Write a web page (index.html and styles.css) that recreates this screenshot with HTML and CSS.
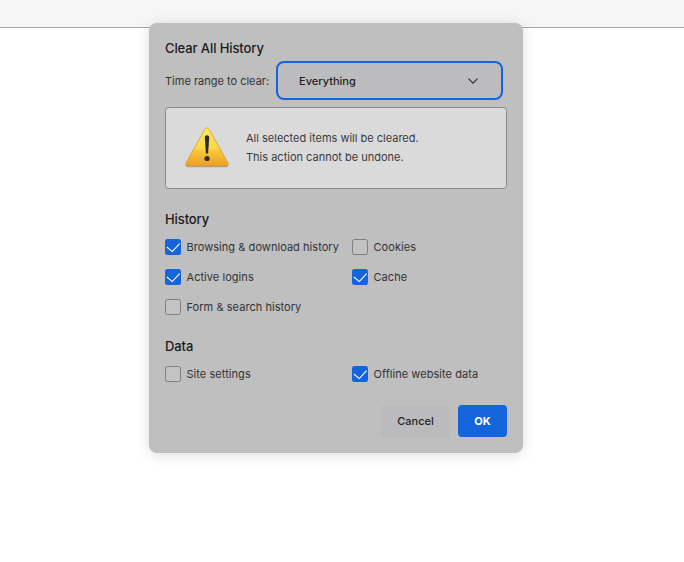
FILE: index.html
```html
<!DOCTYPE html>
<html lang="en">
<head>
<meta charset="utf-8">
<title>Clear All History</title>
<link rel="stylesheet" href="styles.css">
</head>
<body>
<div class="toolbar"></div>
<div class="dialog">
  <h1 class="title">Clear All History</h1>
  <div class="range-row">
    <span class="range-label">Time range to clear:</span>
    <div class="select">
      <span>Everything</span>
      <svg class="chevron" width="12" height="8" viewBox="0 0 12 8"><path d="M1.500 1.600 6 6.100l4.500-4.500" fill="none" stroke="#2a2a2e" stroke-width="1.100"/></svg>
    </div>
  </div>
  <div class="warning">
    <svg class="warn-icon" width="46" height="42" viewBox="0 0 46 42">
      <defs>
        <linearGradient id="wg" x1="0" y1="0" x2="0" y2="1">
          <stop offset="0" stop-color="#ffe95e"/>
          <stop offset="0.55" stop-color="#fbd648"/>
          <stop offset="0.6" stop-color="#f8c63c"/>
          <stop offset="1" stop-color="#ee9f22"/>
        </linearGradient>
      </defs>
      <path d="M23 1c1 0 1.700.6 2.300 1.700l18.600 33.100c.9 1.700.2 3-1.700 3H3.800c-1.900 0-2.600-1.300-1.700-3L20.700 2.700C21.300 1.600 22 1 23 1z" fill="#8f8f8f" transform="translate(0 1.400)" opacity=".7"/>
      <path d="M23 1c1 0 1.700.6 2.300 1.700l18.600 33.100c.9 1.700.2 3-1.700 3H3.800c-1.900 0-2.600-1.300-1.700-3L20.700 2.700C21.300 1.600 22 1 23 1z" fill="url(#wg)" stroke="#d99a2b" stroke-width=".8"/>
      <path d="M20.800 10.500c0-1.600 1-2.300 2.200-2.300s2.200.7 2.200 2.300L24.100 26.500h-2.200z" fill="#2b2b2b"/>
      <circle cx="23" cy="31.500" r="2.600" fill="#2b2b2b"/>
    </svg>
    <div class="warn-text">
      <p>All selected items will be cleared.</p>
      <p>This action cannot be undone.</p>
    </div>
  </div>
  <h2 class="section first">History</h2>
  <div class="options">
    <div class="option"><span class="box on"><svg width="16" height="16" viewBox="0 0 16 16"><path d="M1.800 8 7.300 12.600 14.600 4.600" fill="none" stroke="#fff" stroke-width="1.100"/></svg></span>Browsing &amp; download history</div>
    <div class="option"><span class="box"></span>Cookies</div>
    <div class="option"><span class="box on"><svg width="16" height="16" viewBox="0 0 16 16"><path d="M1.800 8 7.300 12.600 14.600 4.600" fill="none" stroke="#fff" stroke-width="1.100"/></svg></span>Active logins</div>
    <div class="option"><span class="box on"><svg width="16" height="16" viewBox="0 0 16 16"><path d="M1.800 8 7.300 12.600 14.600 4.600" fill="none" stroke="#fff" stroke-width="1.100"/></svg></span>Cache</div>
    <div class="option"><span class="box"></span>Form &amp; search history</div>
  </div>
  <h2 class="section second">Data</h2>
  <div class="options">
    <div class="option"><span class="box"></span>Site settings</div>
    <div class="option"><span class="box on"><svg width="16" height="16" viewBox="0 0 16 16"><path d="M1.800 8 7.300 12.600 14.600 4.600" fill="none" stroke="#fff" stroke-width="1.100"/></svg></span>Offline website data</div>
  </div>
  <div class="actions">
    <button class="btn cancel">Cancel</button>
    <button class="btn ok">OK</button>
  </div>
</div>
</body>
</html>
```
FILE: styles.css
```css
* { box-sizing: border-box; }
html, body { margin: 0; height: 100%; background: #fff; }
body { font-family: Inter, "Liberation Sans", sans-serif; position: relative; overflow: hidden; }
.toolbar { height: 28px; background: #f6f6f6; border-bottom: 1px solid #a8a8a8; }
.dialog {
  position: absolute; left: 149px; top: 23px; width: 374px; height: 430px;
  background: #bfbfbf; border-radius: 8px; padding: 16px;
  box-shadow: 0 2px 14px rgba(0,0,0,.14);
  color: #1a1a1c;
}
.title { margin: 0; font-size: 13px; font-weight: 500; line-height: 18px; height: 18px; letter-spacing: -.1px; }
.range-row { display: flex; align-items: center; margin-top: 4px; }
.range-label { font-size: 11px; color: #333335; width: 111px; }
.select {
  width: 227px; height: 39px; border: 2px solid #1465dc; border-radius: 8px;
  display: flex; align-items: center; justify-content: space-between;
  padding: 0 22px 0 21px; font-size: 11px; font-weight: 500; color: #1f1f21; background: #bcbcbe;
}
.warning {
  margin-top: 7px; height: 82px; width: 342px; display: flex; align-items: center;
  background: #dadadb; border: 1px solid #8a8a8a; border-radius: 4px; padding-left: 18px;
}
.warn-icon { flex: none; }
.warn-text { margin-left: 16px; font-size: 11px; color: #3a3a3c; }
.warn-text p { margin: 0; line-height: 19px; }
.section { margin: 0; font-size: 13px; font-weight: 500; line-height: 18px; letter-spacing: -.1px; }
.section.first { margin-top: 21px; }
.section.second { margin-top: 22px; }
.options { display: grid; grid-template-columns: 187px 1fr; row-gap: 14px; margin-top: 11px; }
.option { display: flex; align-items: center; height: 16px; font-size: 11px; color: #333335; white-space: nowrap; letter-spacing: .05px; }
.box { flex: none; width: 16px; height: 16px; margin-right: 5.500px; border: 1px solid #7f7f81; border-radius: 2.500px; background: #c3c3c4; }
.box.on { border: 0; background: #1465dc; }
.box svg { display: block; }
.actions { display: flex; justify-content: flex-end; gap: 8px; margin-top: 23px; }
.btn { height: 32px; border: 0; border-radius: 4px; font-family: inherit; font-size: 11px; padding: 0; }
.cancel { width: 69px; background: #bbbbbd; color: #1f1f21; font-weight: 500; }
.ok { width: 49px; background: #1465dc; color: #fff; font-weight: 700; }
```
